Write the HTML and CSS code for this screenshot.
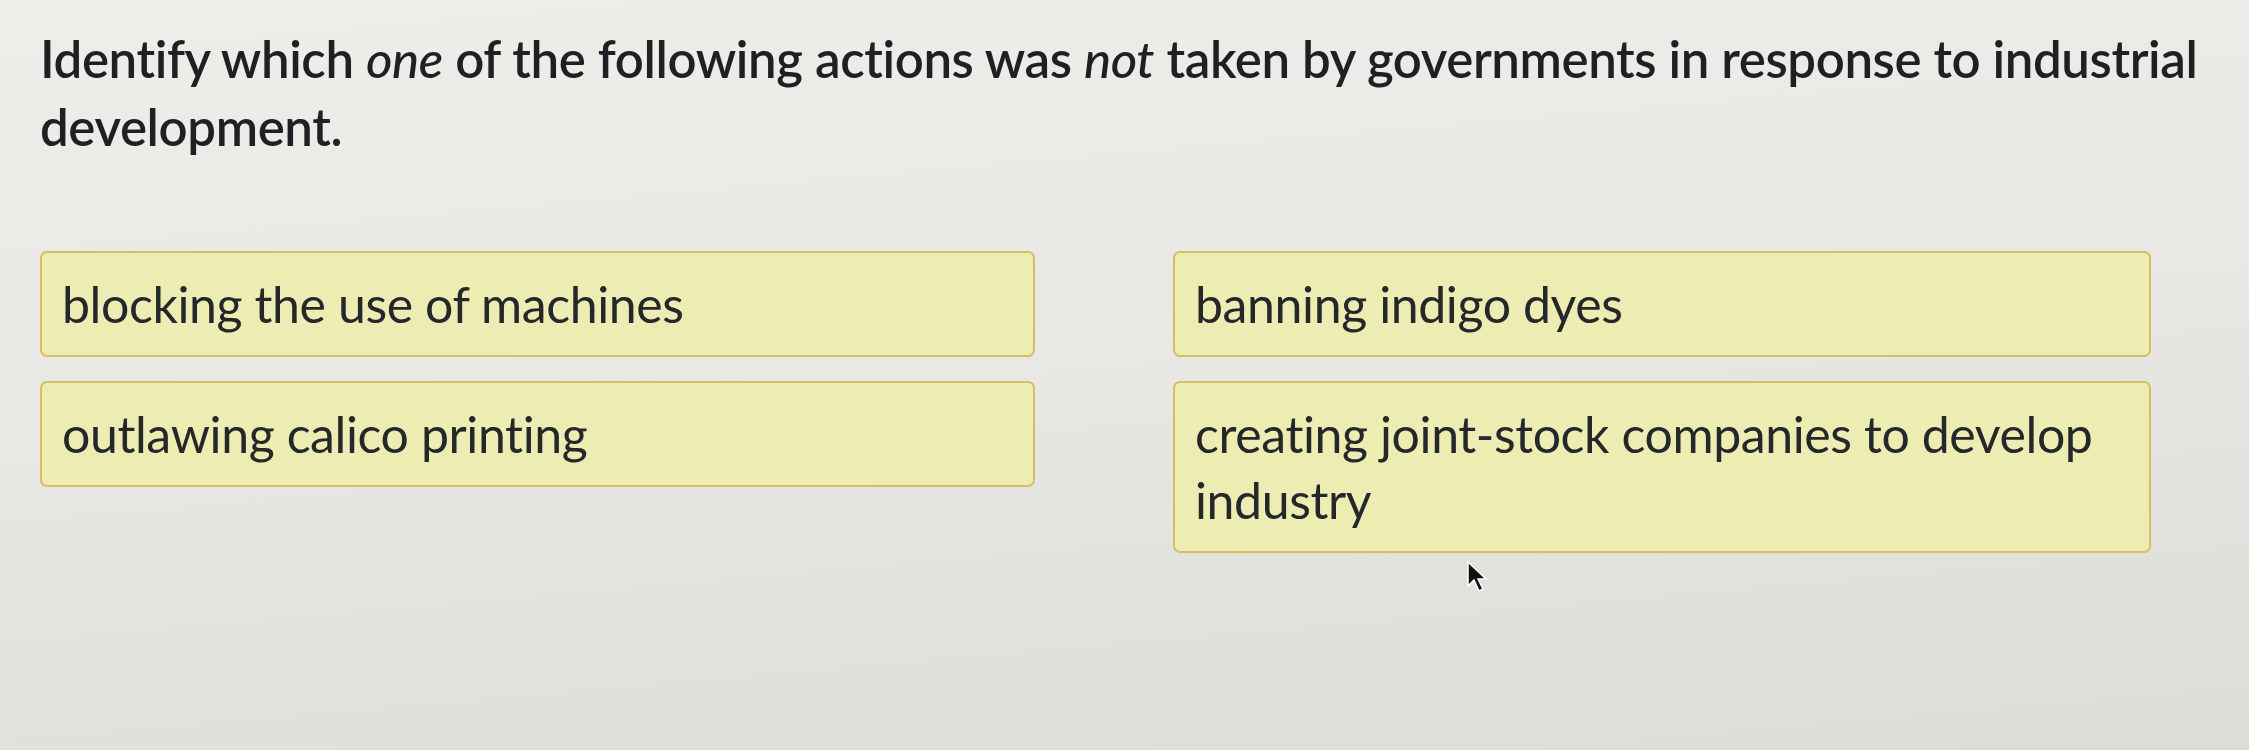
FILE: index.html
```html
<!DOCTYPE html>
<html lang="en">
  <head>
    <title>Question</title>
    <meta charset="UTF-8">
    <link rel="stylesheet" href="styles.css">
  </head>
  <body>
    <div class="question">
      <p class="prompt">Identify which <em>one</em> of the following actions was <em>not</em> taken by governments in response to industrial development.</p>
      <!--Answer choices-->
      <div class="choices">
        <div class="choice">blocking the use of machines</div>
        <div class="choice">banning indigo dyes</div>
        <div class="choice">outlawing calico printing</div>
        <div class="choice">creating joint-stock companies to develop industry</div>
      </div>
    </div>
    <svg class="cursor" width="22" height="34" viewBox="0 0 22 34">
      <path d="M2 2 L2 26 L8 20 L13 31 L17 29 L12 19 L20 19 Z" fill="#111" stroke="#fff" stroke-width="1.5"/>
    </svg>
  </body>
</html>
```
FILE: styles.css
```css
html, body {
	margin: 0;
	height: 100%;
}
body {
	font-family: Lato, "Open Sans", sans-serif;
	color: #1e2124;
	background: linear-gradient(175deg, #eeede9 0%, #e8e8e4 45%, #dddcd7 100%);
	position: relative;
	overflow: hidden;
}
.question {
	padding: 25px 16px 0 40px;
}
.prompt {
	font-size: 51px;
	font-weight: 600;
	line-height: 68px;
	margin: 0 0 90px 0;
	letter-spacing: -0.4px;
}
.prompt em {
	font-weight: 500;
}
.choices {
	display: grid;
	grid-template-columns: 995px 978px;
	column-gap: 138px;
	row-gap: 24px;
	align-items: start;
}
.choice {
	background-color: #edecb3;
	border: 2px solid #d5bf62;
	border-radius: 7px;
	padding: 18px 20px;
	font-size: 50px;
	line-height: 66px;
	letter-spacing: -0.4px;
	color: #25282a;
}
.cursor {
	position: absolute;
	left: 1466px;
	top: 560px;
}
```
